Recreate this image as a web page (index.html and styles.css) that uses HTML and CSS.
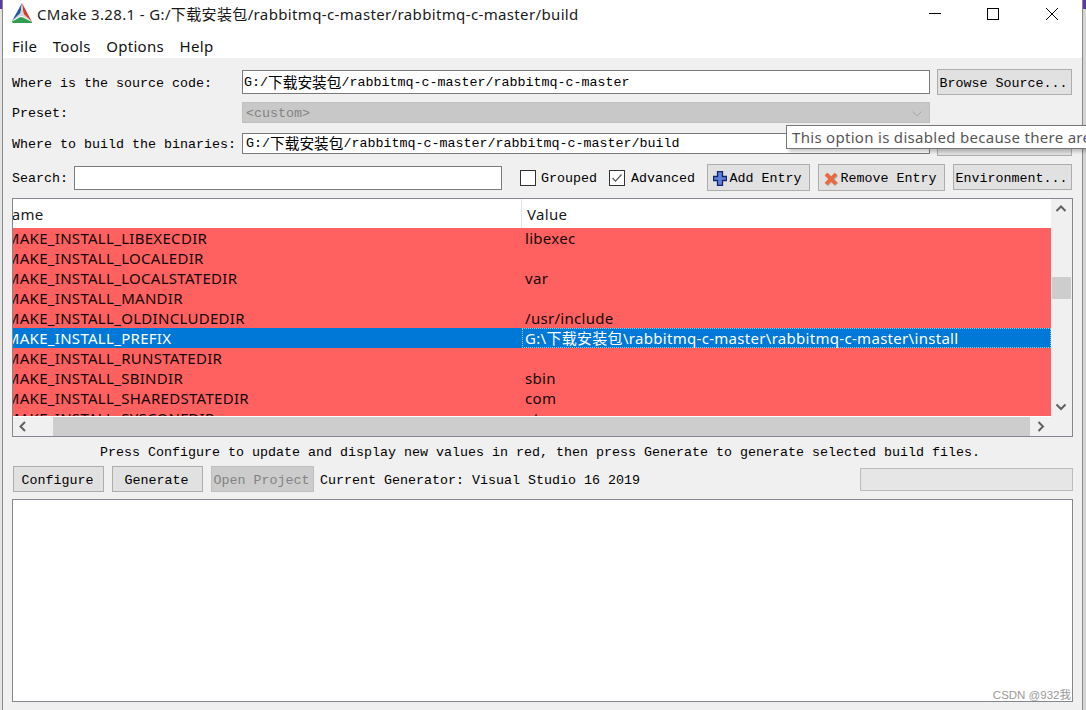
FILE: index.html
```html
<!DOCTYPE html>
<html lang="en">
<head>
<meta charset="utf-8">
<title>CMake</title>
<link rel="stylesheet" href="styles.css">
</head>
<body>
<div class="desktop">
  <div class="edge edge-left"></div>
  <div class="window">
    <header class="titlebar">
      <svg class="logo" width="20" height="20" viewBox="0 0 20 20">
        <polygon points="10,0 0,18 8.500,10" fill="#1c5aa6"/>
        <polygon points="10,0 20,19 11.500,11" fill="#d63a2c"/>
        <polygon points="0,18.500 0.500,20 20,20 20,19 11,14.500 8.500,14" fill="#2f9e4f"/>
        <polygon points="10,1 8.500,10 1,17.500 8.500,13 11,13.500 19,18 11.500,11" fill="#d4d4d4"/>
      </svg>
      <span class="title">CMake 3.28.1 - G:/下载安装包/rabbitmq-c-master/rabbitmq-c-master/build</span>
      <div class="controls">
        <svg class="ctl" width="58" height="30" viewBox="0 0 58 30"><path d="M22 13.500h12" stroke="#000" fill="none"/></svg>
        <svg class="ctl" width="58" height="30" viewBox="0 0 58 30"><rect x="22.500" y="8.500" width="11" height="11" stroke="#000" fill="none"/></svg>
        <svg class="ctl" width="58" height="30" viewBox="0 0 58 30"><path d="M23 8l12 12M35 8l-12 12" stroke="#000" fill="none"/></svg>
      </div>
    </header>
    <nav class="menubar">
      <span class="menu">File</span><span class="menu">Tools</span><span class="menu">Options</span><span class="menu">Help</span>
    </nav>
    <main class="panel">
      <div class="row row-source">
        <span class="label">Where is the source code:</span>
        <div class="field field-tall">G:/<span class="cjk">下载安装包</span>/rabbitmq-c-master/rabbitmq-c-master</div>
        <button class="btn btn-side">Browse Source...</button>
      </div>
      <div class="row row-preset">
        <span class="label">Preset:</span>
        <div class="combo"><span>&lt;custom&gt;</span>
          <svg width="10" height="6" viewBox="0 0 10 6"><path d="M0.500 0.500L5 5l4.500-4.500" stroke="#a8a8a8" fill="none"/></svg>
        </div>
        <div class="side-gap"></div>
      </div>
      <div class="row row-build">
        <span class="label">Where to build the binaries:</span>
        <div class="field field-short">G:/<span class="cjk">下载安装包</span>/rabbitmq-c-master/rabbitmq-c-master/build</div>
        <button class="btn btn-side">Browse Build...</button>
      </div>
      <div class="row row-search">
        <span class="search-label">Search:</span>
        <div class="field search-field"></div>
        <label class="check check-grouped"><span class="box"></span>Grouped</label>
        <label class="check check-advanced"><span class="box"><svg width="14" height="14" viewBox="0 0 14 14"><path d="M2.500 7l3 3.200L11.500 3.500" stroke="#555" stroke-width="1.200" fill="none"/></svg></span>Advanced</label>
        <button class="btn btn-add">
          <svg width="14" height="15" viewBox="0 0 14 15"><path d="M4.500 0.500h5v5h4v4h-4v5h-5v-5h-4v-4h4z" fill="#5f80d8" stroke="#16246e" stroke-width="1.300"/></svg>Add Entry</button>
        <button class="btn btn-remove">
          <svg width="14" height="14" viewBox="0 0 14 14"><path d="M2 2l10 10M12 2L2 12" stroke="#b5aea6" stroke-width="4.200" transform="translate(.6 .6)"/><path d="M2 2l10 10M12 2L2 12" stroke="#ea6a40" stroke-width="3.800"/></svg>Remove Entry</button>
        <button class="btn btn-env">Environment...</button>
      </div>
      <section class="table">
        <div class="table-main">
          <div class="thead">
            <div class="cell-name"><span class="name-shift head-shift">Name</span></div>
            <div class="cell-value head-value">Value</div>
          </div>
          <div class="rows">
            <div class="tr"><div class="cell-name"><span class="name-shift">CMAKE_INSTALL_LIBEXECDIR</span></div><div class="cell-value">libexec</div></div>
            <div class="tr"><div class="cell-name"><span class="name-shift">CMAKE_INSTALL_LOCALEDIR</span></div><div class="cell-value"></div></div>
            <div class="tr"><div class="cell-name"><span class="name-shift">CMAKE_INSTALL_LOCALSTATEDIR</span></div><div class="cell-value">var</div></div>
            <div class="tr"><div class="cell-name"><span class="name-shift">CMAKE_INSTALL_MANDIR</span></div><div class="cell-value"></div></div>
            <div class="tr"><div class="cell-name"><span class="name-shift">CMAKE_INSTALL_OLDINCLUDEDIR</span></div><div class="cell-value">/usr/include</div></div>
            <div class="tr tr-selected"><div class="cell-name"><span class="name-shift">CMAKE_INSTALL_PREFIX</span></div><div class="cell-value">G:\下载安装包\rabbitmq-c-master\rabbitmq-c-master\install</div></div>
            <div class="tr"><div class="cell-name"><span class="name-shift">CMAKE_INSTALL_RUNSTATEDIR</span></div><div class="cell-value"></div></div>
            <div class="tr"><div class="cell-name"><span class="name-shift">CMAKE_INSTALL_SBINDIR</span></div><div class="cell-value">sbin</div></div>
            <div class="tr"><div class="cell-name"><span class="name-shift">CMAKE_INSTALL_SHAREDSTATEDIR</span></div><div class="cell-value">com</div></div>
            <div class="tr"><div class="cell-name"><span class="name-shift">CMAKE_INSTALL_SYSCONFDIR</span></div><div class="cell-value">etc</div></div>
          </div>
        </div>
        <div class="vscroll">
          <svg width="20" height="20" viewBox="0 0 20 20"><path d="M5.500 12L10 7.500l4.500 4.500" stroke="#606060" stroke-width="2" fill="none"/></svg>
          <div class="vtrack"><div class="vthumb"></div></div>
          <svg width="20" height="20" viewBox="0 0 20 20"><path d="M5.500 7.500L10 12l4.500-4.500" stroke="#606060" stroke-width="2" fill="none"/></svg>
        </div>
        <div class="hscroll">
          <svg width="20" height="19" viewBox="0 0 20 19"><path d="M12 5l-4.500 4.500L12 14" stroke="#606060" stroke-width="2" fill="none"/></svg>
          <div class="hgap"></div>
          <div class="hthumb"></div>
          <svg width="21" height="19" viewBox="0 0 21 19"><path d="M8.500 5l4.500 4.500L8.500 14" stroke="#606060" stroke-width="2" fill="none"/></svg>
        </div>
        <div class="corner"></div>
      </section>
      <p class="status">Press Configure to update and display new values in red, then press Generate to generate selected build files.</p>
      <div class="actions">
        <button class="btn btn-action">Configure</button>
        <button class="btn btn-action">Generate</button>
        <button class="btn btn-open" disabled>Open Project</button>
        <span class="generator">Current Generator: Visual Studio 16 2019</span>
        <div class="progress"></div>
      </div>
      <div class="output"></div>
    </main>
  </div>
  <div class="edge edge-right"></div>
  <div class="tooltip">This option is disabled because there are errors in the project</div>
  <div class="watermark">CSDN @932我</div>
</div>
</body>
</html>
```

FILE: styles.css
```css
* { box-sizing: border-box; }
html, body { margin: 0; padding: 0; }
body { width: 1086px; height: 710px; overflow: hidden; background: #fff; }
.desktop { position: relative; display: flex; width: 1086px; height: 710px; overflow: hidden; }
.edge { flex: none; height: 710px; }
.edge-left { width: 3px; background: linear-gradient(#5a3aa0 9px, #e4e4e4 9px); border-right: 1px solid #8a8a8a; }
.edge-right { width: 4px; background: linear-gradient(#5a3aa0 9px, #d4d4d4 9px); border-left: 1px solid #8a8a8a; }
.window { flex: none; width: 1079px; height: 710px; display: flex; flex-direction: column; font-family: "Liberation Mono", monospace; font-size: 13.33px; color: #000; }
.titlebar { flex: none; height: 30px; background: #fff; display: flex; align-items: center; padding-left: 9px; position: relative; }
.logo { flex: none; margin-top: -5px; }
.title { margin-left: 5px; font-family: "Noto Sans", "Noto Sans CJK SC", sans-serif; font-size: 15px; letter-spacing: .36px; color: #1a1a1a; white-space: nowrap; margin-top: -3px; }
.controls { margin-left: auto; display: flex; margin-right: 1px; }
.ctl { display: block; }
.menubar { flex: none; height: 28px; background: #fff; display: flex; align-items: center; padding: 4px 0 0 9px; font-family: "Noto Sans", sans-serif; font-size: 15px; letter-spacing: .3px; gap: 15.5px; color: #111; }
.panel { flex: 1; background: #f0f0f0; padding: 11px 9px 0; display: flex; flex-direction: column; min-height: 0; }
.row { display: flex; align-items: center; padding-right: 1px; flex: none; }
.row-source { height: 26px; }
.row-preset { height: 21px; margin-top: 7px; }
.row-build { height: 26px; margin-top: 7px; }
.row-search { height: 27px; margin-top: 8px; }
.label { width: 230px; flex: none; white-space: pre; padding-top: 2px; }
.field { flex: 1; background: #fff; border: 1px solid #7a7a7a; display: flex; align-items: center; white-space: pre; padding: 2px 0 0 1px; min-width: 0; line-height: 1; }
.field-tall { height: 24px; }
.field-short { height: 21px; padding-left: 3px; }
.cjk { font-family: "Noto Sans CJK SC", sans-serif; font-size: 14.7px; line-height: 1; margin-top: -2px; }
.combo { flex: 1; height: 21px; background: #c8c8c8; border: 1px solid #c0c0c0; color: #838383; display: flex; align-items: center; justify-content: space-between; padding: 2px 7px 0 3px; }
.side-gap { flex: none; width: 142px; }
.btn { font-family: "Liberation Mono", monospace; font-size: 13.33px; color: #000; background: #e1e1e1; border: 1px solid #adadad; padding: 2px 2px 0 0; height: 26px; display: flex; align-items: center; justify-content: center; white-space: pre; flex: none; }
.btn-side { width: 135px; margin-left: 7px; }
.search-label { flex: none; width: 62px; padding-top: 2px; }
.search-field { flex: none; width: 428px; height: 24px; }
.check { display: flex; align-items: center; flex: none; padding-top: 2px; }
.box { width: 16px; height: 16px; border: 1px solid #333; background: #fff; margin: -2px 5px 0 0; display: flex; align-items: center; justify-content: center; }
.check-grouped { margin-left: 18px; }
.check-advanced { margin-left: 12px; }
.check-advanced .box { margin-right: 6px; }
.btn-add { width: 103px; height: 27px; margin-left: 12px; gap: 3px; padding-right: 3px; }
.btn-remove { width: 127px; height: 27px; margin-left: 8px; gap: 3px; padding-right: 3px; }
.btn-env { width: 119px; margin-left: 8px; margin-top: -1px; }
.table { flex: none; height: 239px; margin-top: 7px; border: 1px solid #828790; background: #f0f0f0; display: grid; grid-template-columns: 1038px 21px; grid-template-rows: 218px 19px; }
.table-main { background: #fff; min-width: 0; overflow: hidden; font-family: "Noto Sans", "Noto Sans CJK SC", sans-serif; font-size: 15px; letter-spacing: .3px; }
.thead { height: 29px; display: flex; background: #fff; align-items: center; color: #1a1a1a; }
.thead .cell-name { border-right: 1px solid #e5e5e5; height: 100%; display: flex; align-items: center; }
.rows { height: 188px; overflow: hidden; background: #ff6161; }
.tr { height: 20px; display: flex; align-items: center; color: #140808; }
.cell-name { flex: none; width: 509px; overflow: hidden; white-space: nowrap; }
.cell-value { flex: 1; white-space: nowrap; padding-left: 3px; }
.head-value { padding-left: 5px; }
.name-shift { display: inline-block; margin-left: -17px; }
.head-shift { margin-left: -13px; }
.tr-selected { background: #0078d7; color: #fff; }
.tr-selected .cell-value { height: 20px; line-height: 18px; border: 1px dotted #9cc8ec; padding-left: 2px; }
.vscroll { background: #f0f0f0; display: flex; flex-direction: column; }
.vscroll svg { flex: none; display: block; }
.vtrack { flex: 1; padding: 58px 0 0 1px; }
.vthumb { height: 22px; width: 19px; background: #cdcdcd; }
.hscroll { background: #f0f0f0; display: flex; align-items: stretch; }
.hscroll svg { flex: none; display: block; }
.hgap { flex: none; width: 20px; }
.hthumb { flex: 1; background: #cdcdcd; }
.corner { background: #f0f0f0; }
.status { flex: none; height: 29px; margin: 0; display: flex; align-items: center; justify-content: center; padding: 2px 5px 0 0; white-space: pre; }
.actions { flex: none; height: 26px; display: flex; align-items: center; padding-left: 1px; }
.btn-action { width: 91px; margin-right: 8px; }
.btn-open { width: 103px; background: #cccccc; border-color: #bfbfbf; color: #838383; }
.generator { margin-left: 6px; white-space: pre; padding-top: 2px; }
.progress { margin-left: auto; width: 213px; height: 23px; background: #e6e6e6; border: 1px solid #bcbcbc; }
.output { flex: none; height: 203px; margin-top: 7px; background: #fff; border: 1px solid #828790; }
.tooltip { position: absolute; left: 786px; top: 125px; width: 400px; height: 24px; background: #fff; border: 1px solid #767676; box-shadow: 3px 3px 3px rgba(0,0,0,.2); color: #575757; font-family: "Noto Sans", sans-serif; font-size: 15px; letter-spacing: .3px; line-height: 22px; padding-left: 5px; white-space: nowrap; }
.watermark { position: absolute; right: 15px; top: 686px; font-family: "Liberation Sans", "Noto Sans CJK SC", sans-serif; font-size: 11.5px; color: #9a9a9a; }
```
